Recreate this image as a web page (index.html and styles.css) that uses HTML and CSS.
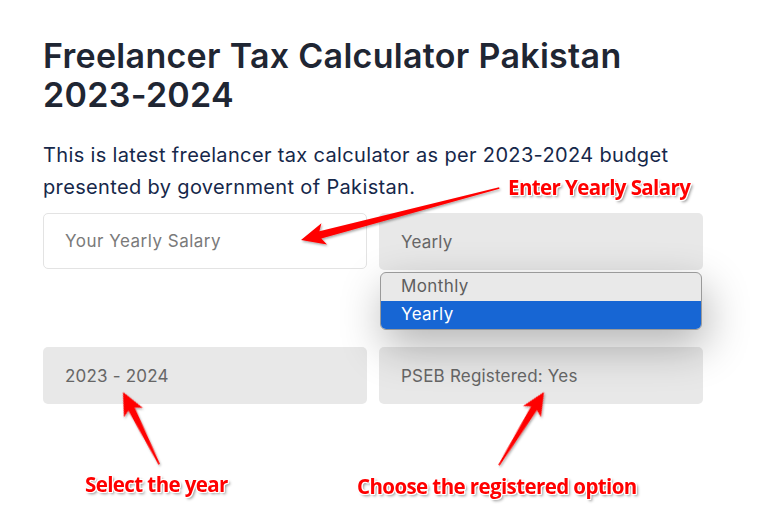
FILE: index.html
```html
<!DOCTYPE html>
<html lang="en">
<head>
<meta charset="utf-8">
<title>Freelancer Tax Calculator Pakistan 2023-2024</title>
<link rel="stylesheet" href="styles.css">
</head>
<body>
<div class="stage">
  <main class="page">
    <h1 class="title">Freelancer Tax Calculator Pakistan <span class="nowrap">2023-2024</span></h1>
    <p class="intro">This is latest freelancer tax calculator as per 2023-2024 budget presented by government of Pakistan.</p>
    <div class="form-grid">
      <div class="field field-input"><span class="placeholder">Your Yearly Salary</span></div>
      <div class="field field-select select-open">
        <span class="value">Yearly</span>
        <ul class="dropdown">
          <li class="option">Monthly</li>
          <li class="option option-active">Yearly</li>
        </ul>
      </div>
      <div class="field field-select"><span class="value">2023 - 2024</span></div>
      <div class="field field-select"><span class="value">PSEB Registered: Yes</span></div>
    </div>
  </main>

  <svg class="arrows" width="761" height="532" viewBox="0 0 761 532" aria-hidden="true">
    <defs>
      <filter id="sh" x="-20%" y="-20%" width="140%" height="140%">
        <feDropShadow dx="1" dy="1.5" stdDeviation="1.2" flood-color="#000" flood-opacity="0.35"/>
      </filter>
      <polygon id="arrowA" points="0,0 -24,-11 -20,-3.8 -205,-0.8 -205,0.8 -20,3.8 -24,11"/>
      <polygon id="arrowB" points="0,0 -23,-10.5 -19,-3.6 -81,-0.8 -81,0.8 -19,3.6 -23,10.5"/>
      <polygon id="arrowC" points="0,0 -23,-10.5 -19,-3.6 -86,-0.8 -86,0.8 -19,3.6 -23,10.5"/>
    </defs>
    <g fill="#ff0000" filter="url(#sh)">
      <use href="#arrowA" transform="translate(301,240) rotate(165.3)"/>
      <use href="#arrowB" transform="translate(123,392) rotate(-116.6)"/>
      <use href="#arrowC" transform="translate(544,392) rotate(-58.4)"/>
    </g>
  </svg>

  <span class="note note-salary">Enter Yearly Salary</span>
  <span class="note note-year">Select the year</span>
  <span class="note note-reg">Choose the registered option</span>
</div>
</body>
</html>
```

FILE: styles.css
```css
* { box-sizing: border-box; }

html, body {
  margin: 0;
  padding: 0;
  background: #ffffff;
}

body {
  font-family: Inter, "Noto Sans", "Liberation Sans", sans-serif;
}

.stage {
  position: relative;
  width: 761px;
  height: 532px;
  overflow: hidden;
}

.page {
  width: 660px;
  margin-left: 43px;
  padding-top: 36px;
}

.title {
  margin: 0;
  font-size: 34px;
  line-height: 39px;
  font-weight: 600;
  color: #1f2633;
  letter-spacing: 0.3px;
}

.nowrap { white-space: nowrap; }

.intro {
  margin: 25px 0 0;
  font-size: 20px;
  line-height: 32px;
  font-weight: 400;
  color: #16284a;
  letter-spacing: 0.35px;
}

.form-grid {
  margin-top: 10px;
  display: grid;
  grid-template-columns: 324px 324px;
  column-gap: 12px;
  row-gap: 77px;
}

.field {
  position: relative;
  height: 57px;
  border-radius: 5px;
  display: flex;
  align-items: center;
  padding-left: 22px;
  font-size: 17px;
  letter-spacing: 0.2px;
}

.field-input {
  height: 56px;
  background: #ffffff;
  border: 1.5px solid #e3e3e3;
  padding-left: 21px;
}

.placeholder {
  color: #7a7a7a;
  letter-spacing: 0.5px;
}

.field-select {
  background: #e8e8e8;
}

.value {
  color: #666666;
}

.dropdown {
  position: absolute;
  left: 1px;
  top: 59px;
  width: 322px;
  margin: 0;
  padding: 0;
  list-style: none;
  background: #e9e9e9;
  border: 1px solid #9a9a9a;
  border-radius: 6px;
  overflow: hidden;
  box-shadow: 4px 16px 44px rgba(0, 0, 0, 0.3);
  z-index: 2;
}

.option {
  height: 28px;
  line-height: 27px;
  padding-left: 20px;
  font-size: 17px;
  color: #5e5e5e;
  letter-spacing: 0.4px;
}

.option-active {
  background: #1766d4;
  color: #ffffff;
}

.arrows {
  position: absolute;
  left: 0;
  top: 0;
  pointer-events: none;
  z-index: 3;
}

.note {
  position: absolute;
  z-index: 4;
  font-family: "Open Sans", "Noto Sans", sans-serif;
  font-weight: 700;
  font-size: 20.5px;
  line-height: 20px;
  color: #ff0000;
  white-space: nowrap;
  letter-spacing: -0.6px;
  text-shadow:
    1px 0 0 #fff, -1px 0 0 #fff, 0 1px 0 #fff, 0 -1px 0 #fff,
    1px 1px 0 #fff, -1px -1px 0 #fff, 1px -1px 0 #fff, -1px 1px 0 #fff,
    2px 2px 3px rgba(0, 0, 0, 0.45);
}

.note-salary { left: 508px; top: 177px; }
.note-year { left: 85px; top: 474px; }
.note-reg { left: 357px; top: 476px; }
```
